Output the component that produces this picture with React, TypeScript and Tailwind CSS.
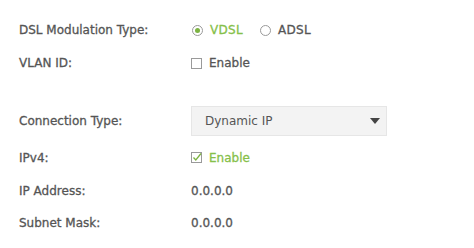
import React from "react";

const font = { fontFamily: "'DejaVu Sans', Verdana, sans-serif" };

function Row({ label, children, cls }: { label: string; children: React.ReactNode; cls: string }) {
  return (
    <div className={`flex items-center ${cls}`}>
      <div className="w-[191px] shrink-0 pl-[19px] text-[12px] text-[#555] [-webkit-text-stroke:0.3px_#555]">{label}</div>
      <div className="flex items-center text-[12px] text-[#555] [-webkit-text-stroke:0.3px_currentColor]">{children}</div>
    </div>
  );
}

export default function App() {
  return (
    <div className="w-[474px] h-[248px] bg-white overflow-hidden" style={font}>
      <div className="flex flex-col pt-[14px]">
        <Row label="DSL Modulation Type:" cls="h-[32px]">
          <span className="ml-[1px] w-[11px] h-[11px] rounded-full border border-[#9a9a9a] flex items-center justify-center">
            <span className="w-[5px] h-[5px] rounded-full bg-[#7cb342]" />
          </span>
          <span className="ml-[7px] text-[#86c04a] tracking-[0.3px]">VDSL</span>
          <span className="ml-[17px] w-[11px] h-[11px] rounded-full border border-[#9a9a9a]" />
          <span className="ml-[7px] tracking-[0.3px]">ADSL</span>
        </Row>
        <Row label="VLAN ID:" cls="h-[32px] mt-[1px]">
          <span className="w-[11px] h-[11px] border border-[#9a9a9a] bg-white" />
          <span className="ml-[7px]">Enable</span>
        </Row>
        <Row label="Connection Type:" cls="h-[30px] mt-[27px]">
          <div className="w-[196px] h-[30px] bg-[#f3f3f3] border border-[#e6e6e6] flex items-center justify-between pl-[13px] pr-[6px] text-[12px] text-[#555] [-webkit-text-stroke:0px]">
            <span>Dynamic IP</span>
            <svg width="10" height="6" viewBox="0 0 10 6">
              <path d="M0 0 H10 L5 6 Z" fill="#444" />
            </svg>
          </div>
        </Row>
        <Row label="IPv4:" cls="h-[32px] mt-[6px]">
          <svg width="11" height="11" viewBox="0 0 11 11" className="mb-[1px]">
            <rect x="0.5" y="0.5" width="10" height="10" fill="white" stroke="#9a9a9a" />
            <path d="M2.5 5.5 L4.8 8 L10 1.5" fill="none" stroke="#7cb342" strokeWidth="1.3" />
          </svg>
          <span className="ml-[7px] text-[#86c04a]">Enable</span>
        </Row>
        <Row label="IP Address:" cls="h-[32px] mt-[1px]">
          <span>0.0.0.0</span>
        </Row>
        <Row label="Subnet Mask:" cls="h-[32px]">
          <span>0.0.0.0</span>
        </Row>
      </div>
    </div>
  );
}
